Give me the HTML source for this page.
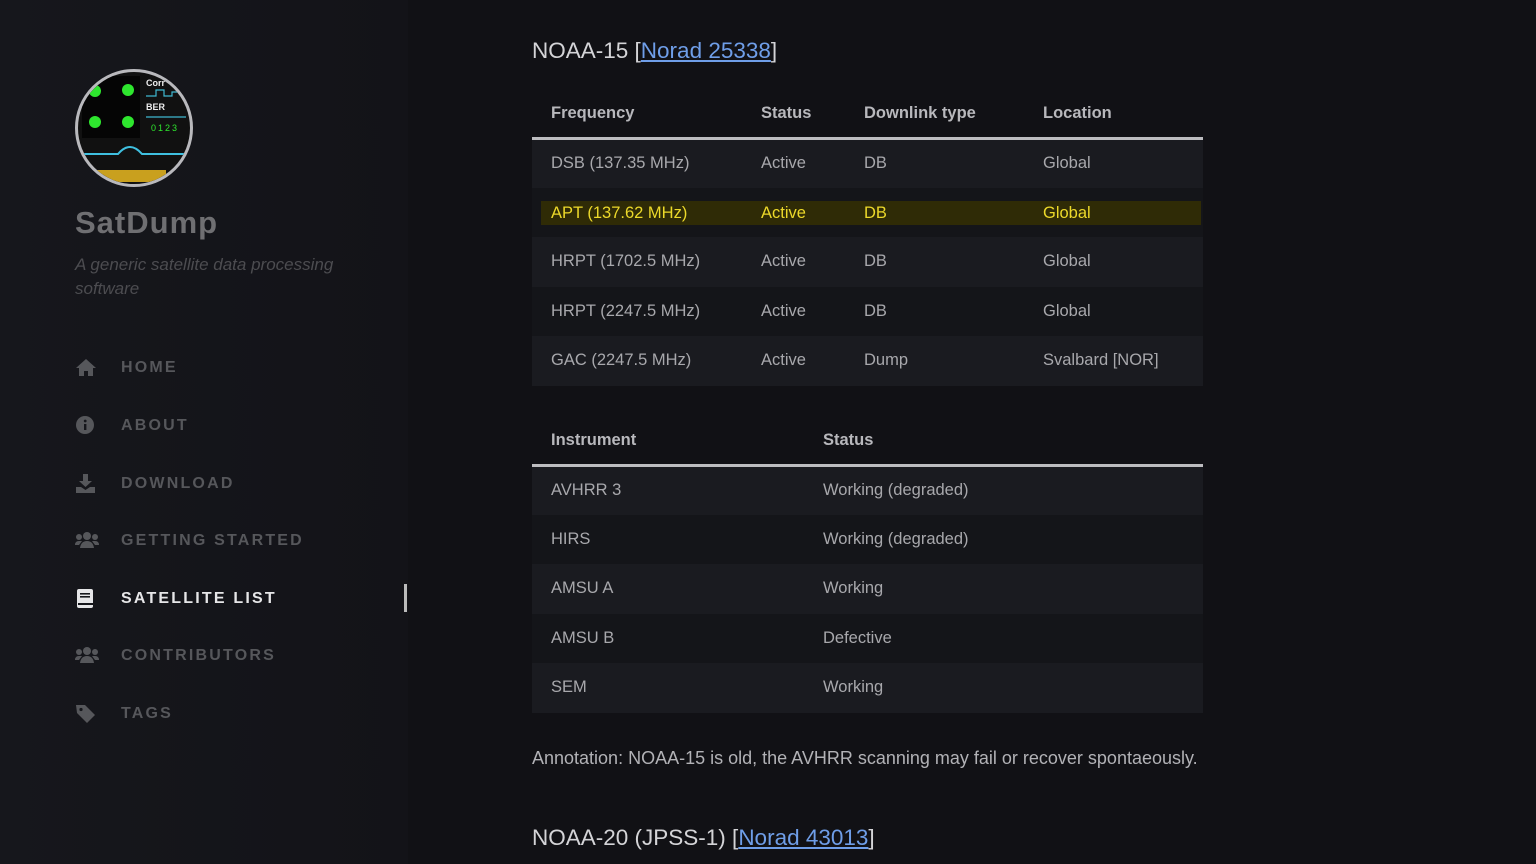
<!DOCTYPE html>
<html><head><meta charset="utf-8"><style>
*{margin:0;padding:0;box-sizing:border-box}
body{width:1536px;height:864px;overflow:hidden;background:#111115;font-family:"Liberation Sans",sans-serif;position:relative}
.side{position:absolute;left:0;top:0;width:408px;height:864px;background:linear-gradient(90deg,#16171c,#131318)}
.logo{position:absolute;left:75px;top:69px;width:118px;height:118px;border-radius:50%;border:3px solid #b9b9bd;background:#111;overflow:hidden}
h1{position:absolute;left:75px;top:205px;font-size:31px;font-weight:bold;color:#6f6f72;letter-spacing:1px}
.tag{position:absolute;left:75px;top:253px;font-size:17px;font-style:italic;color:#4c4c50;line-height:24px;width:280px}
.nav{position:absolute;left:75px;font-size:16px;letter-spacing:2.2px;font-weight:bold;color:#56575b}
.nav span{position:absolute;left:46px;top:0;white-space:nowrap}
.nav svg{position:absolute;left:0;top:-1px}
.act{color:#e6e6e8}
.bar{position:absolute;left:404px;top:584px;width:3px;height:28px;background:#bbb}
h2{position:absolute;left:532px;font-size:22.5px;font-weight:normal;color:#d4d4d7}
h2 a{color:#6f9ee8;text-decoration:underline}
table{position:absolute;left:532px;width:671px;border-collapse:collapse;font-size:16.5px;color:#a8a8ac}
th{text-align:left;font-weight:bold;color:#b8b8bc;height:48px;padding-left:19px;border-bottom:3px solid #bdbdc0}
td{height:49.5px;padding-left:19px}
tr:nth-child(even) td{background:#1a1b20}
tr:nth-child(odd) td{background:#141519}
.hl td{color:#ecd92a}
.ann{position:absolute;left:532px;top:748px;font-size:18px;color:#b2b2b6}
</style></head><body>
<div class="side"></div>
<div class="logo">
<svg width="112" height="112" viewBox="0 0 112 112">
<rect x="4" y="4" width="58" height="62" fill="#050505"/>
<circle cx="17" cy="19" r="6" fill="#2ee62e"/><circle cx="50" cy="18" r="6" fill="#2ee62e"/>
<circle cx="17" cy="50" r="6" fill="#2ee62e"/><circle cx="50" cy="50" r="6" fill="#2ee62e"/>
<text x="68" y="14" fill="#eee" font-size="9" font-family="Liberation Sans" font-weight="bold">Corr</text>
<path d="M68 24h10v-6h8v6h8v-4h12" stroke="#3fb8d0" fill="none" stroke-width="1.2"/>
<text x="68" y="38" fill="#eee" font-size="9" font-family="Liberation Sans" font-weight="bold">BER</text>
<path d="M68 45h40" stroke="#3fb8d0" stroke-width="1.2"/>
<text x="73" y="59" fill="#2ee62e" font-size="9" font-family="Liberation Sans" letter-spacing="2">0123</text>
<path d="M2 82h38q12-14 24 0h46" stroke="#3fc0e0" fill="none" stroke-width="2"/>
<rect x="10" y="98" width="78" height="12" fill="#c9a01e"/>
</svg></div>
<h1>SatDump</h1>
<div class="tag">A generic satellite data processing software</div>

<div class="nav" style="top:359px"><svg width="22" height="18" viewBox="0 0 22 18"><path d="M11 1L1 10h3v8h5v-5h4v5h5v-8h3z" fill="#56575b"/></svg><span>HOME</span></div>
<div class="nav" style="top:417px"><svg width="20" height="20" viewBox="0 0 20 20"><circle cx="10" cy="9" r="9" fill="#56575b"/><rect x="9" y="8" width="2.4" height="6" fill="#15161b"/><circle cx="10.2" cy="5" r="1.4" fill="#15161b"/></svg><span>ABOUT</span></div>
<div class="nav" style="top:475px"><svg width="22" height="20" viewBox="0 0 22 20"><path d="M8 0h5v7h4l-6.5 6L4 7h4z M1 13h5l4.5 3 4.5-3h5v6H1z" fill="#56575b"/></svg><span>DOWNLOAD</span></div>
<div class="nav" style="top:532px"><svg width="24" height="18" viewBox="0 0 24 18"><circle cx="12" cy="5" r="4" fill="#56575b"/><circle cx="4" cy="6" r="3" fill="#56575b"/><circle cx="20" cy="6" r="3" fill="#56575b"/><path d="M5 17q1-7 7-7t7 7zM0 14q0-4 4-4h3l-3 4zM24 14q0-4-4-4h-3l3 4z" fill="#56575b"/></svg><span>GETTING STARTED</span></div>
<div class="nav act" style="top:590px"><svg width="20" height="20" viewBox="0 0 20 20"><rect x="2" y="0" width="16" height="19" rx="2" fill="#e6e6e8"/><rect x="5" y="4" width="10" height="1.6" fill="#15161b"/><rect x="5" y="7" width="10" height="1.6" fill="#15161b"/><rect x="3" y="14" width="15" height="2" fill="#15161b"/></svg><span>SATELLITE LIST</span></div>
<div class="nav" style="top:647px"><svg width="24" height="18" viewBox="0 0 24 18"><circle cx="12" cy="5" r="4" fill="#56575b"/><circle cx="4" cy="6" r="3" fill="#56575b"/><circle cx="20" cy="6" r="3" fill="#56575b"/><path d="M5 17q1-7 7-7t7 7zM0 14q0-4 4-4h3l-3 4zM24 14q0-4-4-4h-3l3 4z" fill="#56575b"/></svg><span>CONTRIBUTORS</span></div>
<div class="nav" style="top:705px"><svg width="22" height="20" viewBox="0 0 22 20"><path d="M1 1h9l10 10-8 8L2 9z" fill="#56575b"/><circle cx="6" cy="5.5" r="1.6" fill="#15161b"/></svg><span>TAGS</span></div>
<div class="bar"></div>

<h2 style="top:38px">NOAA-15 [<a>Norad 25338</a>]</h2>
<table style="top:90px">
<tr><th style="width:210px">Frequency</th><th style="width:103px">Status</th><th style="width:179px">Downlink type</th><th>Location</th></tr>
<tr><td>DSB (137.35 MHz)</td><td>Active</td><td>DB</td><td>Global</td></tr>
<tr class="hl"><td>APT (137.62 MHz)</td><td>Active</td><td>DB</td><td>Global</td></tr>
<tr><td>HRPT (1702.5 MHz)</td><td>Active</td><td>DB</td><td>Global</td></tr>
<tr><td>HRPT (2247.5 MHz)</td><td>Active</td><td>DB</td><td>Global</td></tr>
<tr><td>GAC (2247.5 MHz)</td><td>Active</td><td>Dump</td><td>Svalbard [NOR]</td></tr>
</table>
<div style="position:absolute;left:541px;top:201px;width:660px;height:24px;background:#2f2b06"></div>
<div style="position:absolute;left:551px;top:202px;font-size:16.5px;color:#ecd92a;line-height:22px">APT (137.62 MHz)</div>
<div style="position:absolute;left:761px;top:202px;font-size:16.5px;color:#ecd92a;line-height:22px">Active</div>
<div style="position:absolute;left:864px;top:202px;font-size:16.5px;color:#ecd92a;line-height:22px">DB</div>
<div style="position:absolute;left:1043px;top:202px;font-size:16.5px;color:#ecd92a;line-height:22px">Global</div>

<table style="top:417px">
<tr><th style="width:272px">Instrument</th><th>Status</th></tr>
<tr><td>AVHRR 3</td><td>Working (degraded)</td></tr>
<tr><td>HIRS</td><td>Working (degraded)</td></tr>
<tr><td>AMSU A</td><td>Working</td></tr>
<tr><td>AMSU B</td><td>Defective</td></tr>
<tr><td>SEM</td><td>Working</td></tr>
</table>
<div class="ann">Annotation: NOAA-15 is old, the AVHRR scanning may fail or recover spontaeously.</div>
<h2 style="top:825px">NOAA-20 (JPSS-1) [<a>Norad 43013</a>]</h2>
</body></html>
